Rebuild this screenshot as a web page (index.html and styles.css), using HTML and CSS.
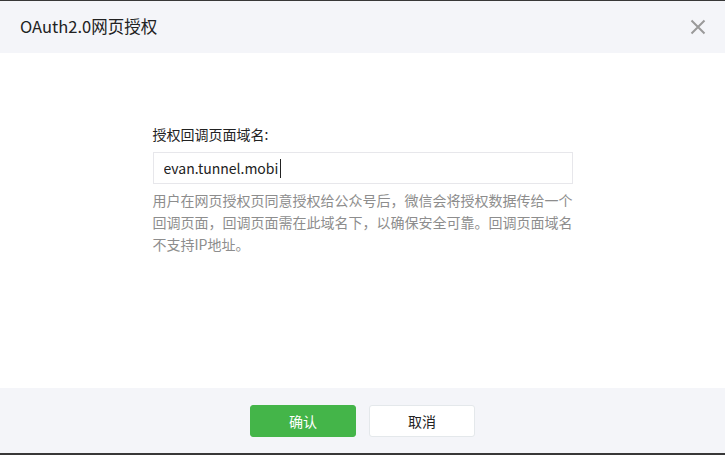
FILE: index.html
```html
<!DOCTYPE html>
<html lang="zh-CN">
<head>
    <meta charset="UTF-8">
    <meta name="viewport" content="width=device-width, initial-scale=1.0">
    <title>OAuth2.0网页授权</title>
    <link rel="stylesheet" href="styles.css">
</head>
<body>
    <div class="dlg">
    <div class="hd">
        <h3 class="tt">OAuth2.0网页授权</h3>
        <button class="cl" aria-label="关闭">
            <svg width="16" height="16" viewBox="0 0 16 16"><path d="M1.5 1.5L14.5 14.5M14.5 1.5L1.5 14.5" stroke="#9a9a9a" stroke-width="2" fill="none"/></svg>
        </button>
    </div>
    <div class="bd">
        <div class="fm">
        <label class="lb" for="dm">授权回调页面域名:</label>
        <div class="ip"><input type="text" id="dm" value="evan.tunnel.mobi"><span class="cr"></span></div>
        <p class="tp">用户在网页授权页同意授权给公众号后，微信会将授权数据传给一个回调页面，回调页面需在此域名下，以确保安全可靠。回调页面域名不支持IP地址。</p>
        </div>
    </div>
    <div class="ft">
        <button class="bt ok">确认</button>
        <button class="bt no">取消</button>
    </div>
    </div>
</body>
</html>
```

FILE: styles.css
```css
html, body {
    margin: 0;
    height: 100%;
}
body {
    background-color: #383838;
    font-family: "Microsoft YaHei", "Noto Sans CJK SC", "Liberation Sans", sans-serif;
    color: #222;
    padding-top: 1px;
    box-sizing: border-box;
}
.dlg {
    background: white;
    height: 452px;
    display: flex;
    flex-direction: column;
}
.hd {
    height: 52px;
    background-color: #f4f5f9;
    display: flex;
    align-items: center;
    justify-content: space-between;
    padding: 0 19px 0 20px;
}
.tt {
    margin: 0;
    font-size: 16.5px;
    font-weight: normal;
    line-height: 1;
    margin-top: -2px;
}
.cl {
    background: none;
    border: none;
    padding: 0;
    width: 16px;
    height: 16px;
    cursor: pointer;
    display: flex;
    margin-top: -1px;
}
.bd {
    flex: 1;
    display: flex;
    justify-content: center;
    padding-top: 71px;
}
.fm {
    width: 420px;
}
.lb {
    display: block;
    font-size: 14px;
    line-height: 20px;
    margin-bottom: 8px;
}
.ip {
    position: relative;
}
.ip input {
    display: block;
    width: 100%;
    box-sizing: border-box;
    height: 32px;
    border: 1px solid #e7e7eb;
    padding: 0 10px;
    font-family: "Microsoft YaHei", "Noto Sans CJK SC", "Liberation Sans", sans-serif;
    font-size: 14px;
    color: #222;
    outline: none;
}
.cr {
    position: absolute;
    left: 127px;
    top: 7px;
    width: 1px;
    height: 19px;
    background: #222;
}
.tp {
    margin: 5px 0 0;
    font-size: 14px;
    line-height: 22px;
    color: #8d8d8d;
}
.ft {
    height: 65px;
    background-color: #f4f5f9;
    display: flex;
    justify-content: center;
    align-items: flex-start;
    gap: 13px;
    padding-top: 17px;
    box-sizing: border-box;
}
.bt {
    width: 106px;
    height: 32px;
    border-radius: 3px;
    font-family: "Microsoft YaHei", "Noto Sans CJK SC", "Liberation Sans", sans-serif;
    font-size: 14px;
    cursor: pointer;
}
.ok {
    background-color: #44b549;
    border: 1px solid #44b549;
    color: white;
}
.no {
    background-color: white;
    border: 1px solid #e4e8eb;
    color: #222;
}
```
